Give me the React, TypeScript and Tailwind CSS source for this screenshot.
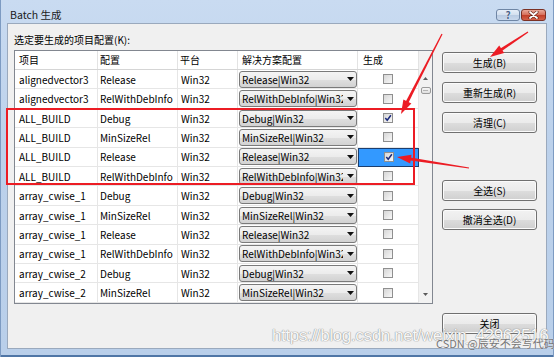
import React from "react";

type Row = [string, string, string, string, boolean];

const rows: Row[] = [
  ["alignedvector3", "Release", "Win32", "Release|Win32", false],
  ["alignedvector3", "RelWithDebInfo", "Win32", "RelWithDebInfo|Win32", false],
  ["ALL_BUILD", "Debug", "Win32", "Debug|Win32", true],
  ["ALL_BUILD", "MinSizeRel", "Win32", "MinSizeRel|Win32", false],
  ["ALL_BUILD", "Release", "Win32", "Release|Win32", true],
  ["ALL_BUILD", "RelWithDebInfo", "Win32", "RelWithDebInfo|Win32", false],
  ["array_cwise_1", "Debug", "Win32", "Debug|Win32", false],
  ["array_cwise_1", "MinSizeRel", "Win32", "MinSizeRel|Win32", false],
  ["array_cwise_1", "Release", "Win32", "Release|Win32", false],
  ["array_cwise_1", "RelWithDebInfo", "Win32", "RelWithDebInfo|Win32", false],
  ["array_cwise_2", "Debug", "Win32", "Debug|Win32", false],
  ["array_cwise_2", "MinSizeRel", "Win32", "MinSizeRel|Win32", false],
];

function Check({ checked }: { checked: boolean }) {
  return (
    <div className="w-[10px] h-[10px] border border-[#8f8f8f] bg-[linear-gradient(135deg,#d6d6d6,#f8f8f8)] flex items-center justify-center">
      {checked && (
        <svg width="8" height="8" viewBox="0 0 8 8">
          <path d="M1.3 4.1 L3.2 6.2 L6.9 1.3" fill="none" stroke="#1b2a7c" strokeWidth="1.5" />
        </svg>
      )}
    </div>
  );
}

function Combo({ text }: { text: string }) {
  return (
    <div className="ml-[1px] w-[118px] h-[17px] rounded-[3px] border border-[#7a7a7a] bg-[linear-gradient(to_bottom,#f4f4f4_0%,#ececec_50%,#dfdfdf_51%,#d2d2d2_100%)] flex items-center">
      <div className="w-[103px] pl-[2px] overflow-hidden whitespace-nowrap leading-[15px]">{text}</div>
      <svg width="7" height="4" viewBox="0 0 7 4" className="ml-[4px]">
        <polygon points="0,0 7,0 3.5,4" fill="#111" />
      </svg>
    </div>
  );
}

function Btn({ children, className }: { children: React.ReactNode; className?: string }) {
  return (
    <div
      className={
        "h-[21px] w-[95px] rounded-[3px] border border-[#707070] bg-[linear-gradient(to_bottom,#f2f2f2_0%,#ebebeb_50%,#dddddd_51%,#cfcfcf_100%)] shadow-[inset_0_0_0_1px_#fbfbfb] flex items-center justify-center leading-[14px] " +
        (className ?? "")
      }
    >
      {children}
    </div>
  );
}

function Arrow({ x1, y1, x2, y2 }: { x1: number; y1: number; x2: number; y2: number }) {
  const dx = x2 - x1;
  const dy = y2 - y1;
  const len = Math.hypot(dx, dy);
  const ux = dx / len;
  const uy = dy / len;
  const px = -uy;
  const py = ux;
  const head = 14;
  const hw = 4.5;
  const bx = x2 - ux * head;
  const by = y2 - uy * head;
  const pts = `${x2},${y2} ${bx + px * hw},${by + py * hw} ${bx - px * hw},${by - py * hw}`;
  const shaft = `${x1 + px * 0.6},${y1 + py * 0.6} ${bx + ux * 2 + px * 1.5},${by + uy * 2 + py * 1.5} ${bx + ux * 2 - px * 1.5},${by + uy * 2 - py * 1.5} ${x1 - px * 0.6},${y1 - py * 0.6}`;
  return (
    <g fill="#ec1c24">
      <polygon points={shaft} />
      <polygon points={pts} />
    </g>
  );
}

export default function App() {
  return (
    <div className="relative w-[554px] h-[357px] overflow-hidden bg-[linear-gradient(to_bottom,#c9dbf1_0%,#bcd1eb_40%,#b9cfea_100%)] shadow-[inset_1px_0_0_#7d9bc2,inset_-1px_0_0_#7d9bc2,inset_0_-2px_0_#4f76a6] font-['Noto_Sans_CJK_SC',sans-serif] text-[10px] text-black">
      {/* title bar */}
      <div className="h-[23px] flex">
        <div className="pl-[10px] pt-[8px] text-[10.5px] leading-[14px] text-[#1a1a1a]">Batch 生成</div>
        <div className="ml-auto mr-[8px] mt-[9px] h-[12px] flex gap-[1px]">
          <div className="w-[24px] h-[12px] rounded-[3px] border border-[#6f86a5] bg-[linear-gradient(to_bottom,#e6eef8_0%,#d3dfee_50%,#b9cbe2_51%,#c9d8ec_100%)] flex items-center justify-center">
            <span className="text-[10px] leading-[10px] font-bold text-[#4a6488] [text-shadow:0_0_1px_#ffffff]">?</span>
          </div>
          <div className="w-[25px] h-[12px] rounded-[3px] border border-[#7b3124] bg-[linear-gradient(to_bottom,#e9a99a_0%,#d7735f_45%,#c2402a_55%,#d3614a_100%)] flex items-center justify-center">
            <svg width="11" height="8" viewBox="0 0 11 8">
              <path d="M2 1 L9 7 M9 1 L2 7" stroke="#5a1a10" strokeWidth="3" strokeLinecap="round" />
              <path d="M2 1 L9 7 M9 1 L2 7" stroke="#ffffff" strokeWidth="1.8" strokeLinecap="round" />
            </svg>
          </div>
        </div>
      </div>

      {/* client area */}
      <div className="mx-[7px] h-[326px] border border-[#9aa9bd] bg-[#f0f0f0] flex pl-[6px]">
        <div className="flex flex-col">
          <div className="mt-[10px] h-[12px] leading-[12px] mb-[4px]">选定要生成的项目配置(K):</div>
          <div className="w-[419px] h-[254px] border border-[#828790] bg-white flex">
            <div className="w-[404px] flex flex-col">
              {/* header */}
              <div className="h-[19px] flex border-b border-[#d5d5d5] leading-[18px]">
                <div className="w-[83px] pl-[4px] border-r border-[#e3e3e3]">项目</div>
                <div className="w-[80px] pl-[2px] border-r border-[#e3e3e3]">配置</div>
                <div className="w-[60px] pl-[2px] border-r border-[#e3e3e3]">平台</div>
                <div className="w-[120px] pl-[4px] border-r border-[#e3e3e3]">解决方案配置</div>
                <div className="w-[61px] pl-[5px] border-r border-[#e3e3e3]">生成</div>
              </div>
              {rows.map((r, i) => (
                <div key={i} className="h-[19.42px] flex">
                  <div className="w-[83px] pl-[4px] border-r border-b border-[#e6e6e6] flex items-center whitespace-nowrap">{r[0]}</div>
                  <div className="w-[80px] pl-[2px] border-r border-b border-[#e6e6e6] flex items-center whitespace-nowrap">{r[1]}</div>
                  <div className="w-[60px] pl-[3px] border-r border-b border-[#e6e6e6] flex items-center">{r[2]}</div>
                  <div className="w-[120px] border-r border-b border-[#e6e6e6] flex items-center">
                    <Combo text={r[3]} />
                  </div>
                  <div
                    className={
                      i === 4
                        ? "w-[61px] bg-[#3399ff] border border-[#1c3e6e] flex items-center justify-center"
                        : "w-[61px] border-r border-b border-[#e6e6e6] flex items-center justify-center"
                    }
                  >
                    <Check checked={r[4]} />
                  </div>
                </div>
              ))}
            </div>
            {/* scrollbar */}
            <div className="w-[13px] bg-[#f2f2f2] flex flex-col items-center">
              <div className="h-[19px]" />
              <div className="h-[17px] flex items-center justify-center">
                <svg width="5" height="3" viewBox="0 0 5 3">
                  <polygon points="0,3 5,3 2.5,0" fill="#5a5a5a" />
                </svg>
              </div>
              <div className="w-[10px] h-[7px] rounded-[2px] border border-[#9b9b9b] bg-[linear-gradient(to_bottom,#f7f7f7,#e0e0e0)] flex items-center justify-center">
                <div className="w-[5px] h-[1px] bg-[#b5b5b5]" />
              </div>
              <div className="flex-1" />
              <div className="h-[17px] flex items-center justify-center">
                <svg width="5" height="3" viewBox="0 0 5 3">
                  <polygon points="0,0 5,0 2.5,3" fill="#5a5a5a" />
                </svg>
              </div>
            </div>
          </div>
        </div>

        <div className="ml-[9px] pt-[28px] flex flex-col">
          <Btn>生成(B)</Btn>
          <Btn className="mt-[9px]">重新生成(R)</Btn>
          <Btn className="mt-[9px]">清理(C)</Btn>
          <Btn className="mt-[47px]">全选(S)</Btn>
          <Btn className="mt-[8px]">撤消全选(D)</Btn>
          <Btn className="mt-[83px]">关闭</Btn>
        </div>
      </div>

      {/* red annotation box */}
      <div className="absolute left-[6px] top-[108px] w-[409px] h-[77px] border-2 border-[#ec1c24] pointer-events-none" />

      {/* red arrows */}
      <svg className="absolute left-0 top-0 pointer-events-none" width="554" height="357" viewBox="0 0 554 357">
        <Arrow x1={442} y1={34} x2={401} y2={114} />
        <Arrow x1={528} y1={32} x2={490} y2={57} />
        <Arrow x1={469} y1={168} x2={397} y2={157} />
      </svg>

      {/* watermark */}
      <div className="absolute left-[272px] top-[327px] text-[17px] leading-[17px] tracking-[-0.35px] font-['Liberation_Sans',Arial,sans-serif] text-[#f8f8f8] [text-shadow:0_0_1px_#8c8c8c,0_0_1px_#8c8c8c] pointer-events-none whitespace-nowrap">
        https://blog.csdn.net/weixin_42962516
      </div>
      <div className="absolute left-[436px] top-[337px] text-[11px] leading-[13px] text-[#767676] [text-shadow:0_0_1px_#ffffff] pointer-events-none whitespace-nowrap">
        CSDN @辰安不会写代码
      </div>
    </div>
  );
}
